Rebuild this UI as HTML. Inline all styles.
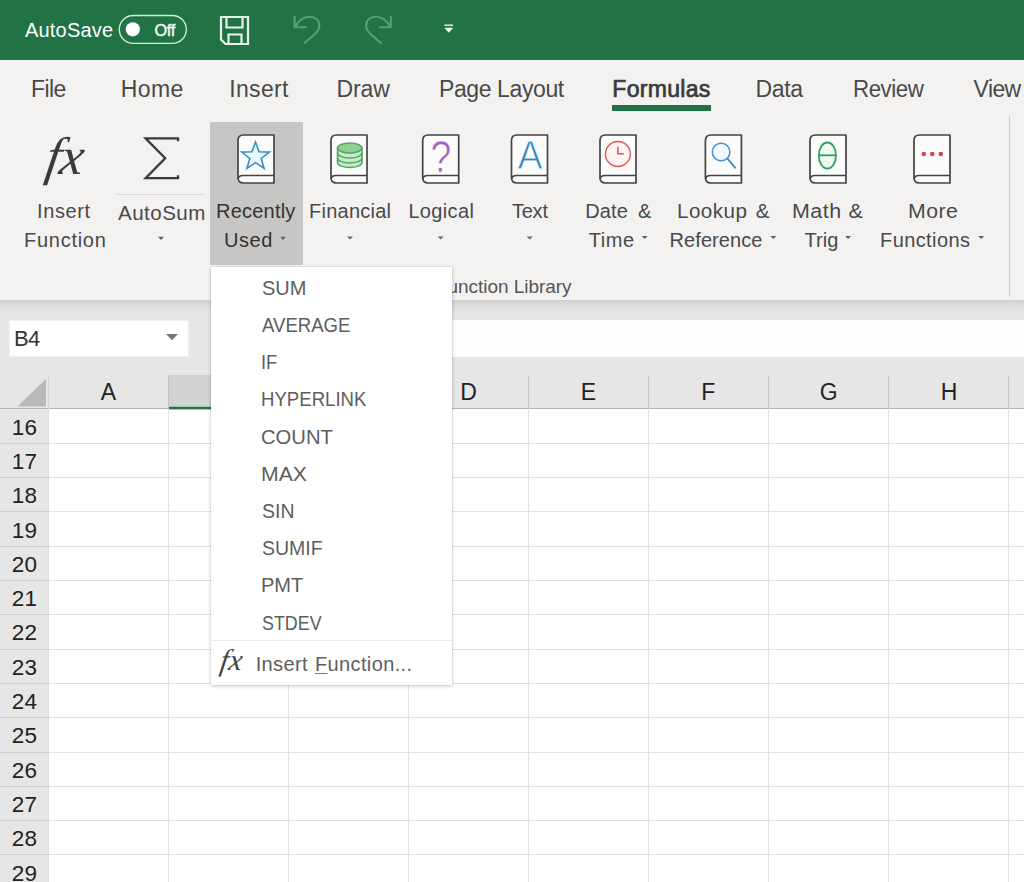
<!DOCTYPE html>
<html lang="en">
<head>
<meta charset="utf-8">
<title>Excel - Recently Used</title>
<style>
html,body{margin:0;padding:0;}
body{width:1024px;height:882px;overflow:hidden;position:relative;background:#fff;font-family:"Liberation Sans",sans-serif;}
.a{position:absolute;}
.t{position:absolute;white-space:nowrap;line-height:normal;}
#title{left:0;top:0;width:1024px;height:60px;background:#217346;}
#ribbon{left:0;top:60px;width:1024px;height:240px;background:#f3f2f1;}
#rshadow{left:0;top:300px;width:1024px;height:14px;background:linear-gradient(#cdcdcd,#d7d7d7 18%,#dfdfdf 50%,#e6e6e6);}
#fbar{left:0;top:300px;width:1024px;height:74px;background:#e6e6e6;}
#namebox{left:8.5px;top:319.5px;width:180px;height:37.5px;background:#fff;box-sizing:border-box;border:1px solid #f0f0f0;}
#finput{left:300px;top:320px;width:724px;height:36.5px;background:#fdfdfd;}
#colhdr{left:0;top:374px;width:1024px;height:35px;background:#e6e6e6;border-bottom:1px solid #b4b4b4;box-sizing:border-box;}
#rowhdr{left:0;top:409px;width:48px;height:473px;background:#e6e6e6;}
#grid{left:48px;top:409px;width:976px;height:473px;background:#fff;}
#hl{left:210px;top:122px;width:93px;height:143px;background:#c8c6c4;}
#menu{left:211px;top:267px;width:241px;height:418px;background:#fff;box-shadow:0 1px 4px rgba(0,0,0,0.22),0 0 1px rgba(0,0,0,0.2);}
#msep{left:211px;top:640px;width:241px;height:1px;background:#ebebeb;}
u{text-decoration-thickness:1px;text-underline-offset:1.5px;text-decoration-color:#777;}
#tabul{left:612.3px;top:105px;width:98.8px;height:5.7px;background:#217346;}
</style>
</head>
<body>
<div class="a" id="title"></div>
<div class="a" id="ribbon"></div>
<div class="a" id="fbar"></div>
<div class="a" id="rshadow"></div>
<div class="a" id="namebox"></div>
<div class="a" id="finput"></div>
<div class="a" id="colhdr"></div>
<div class="a" id="grid"></div>
<div class="a" id="rowhdr"></div>
<div class="a" id="hl"></div>
<div class="a" id="tabul"></div>
<svg class="a" style="left:0;top:0" width="1024" height="882" viewBox="0 0 1024 882">
<rect x="119.3" y="15.5" width="67" height="27.9" rx="13.95" fill="none" stroke="#d3eadc" stroke-width="1.4"/>
<circle cx="132.8" cy="29.3" r="7.1" fill="#fff"/>
<g fill="none" stroke="#e6f2ea" stroke-width="2.2" stroke-linejoin="miter"><path d="M221 17H248V44H225.5L221 39.5Z"/><path d="M226.5 17V27.5H242.5V17"/><path d="M228.5 44V34.5H241.5V44"/></g>
<g fill="none" stroke="#56a077" stroke-width="2.1"><path d="M294.6 16V27.3H306.4"/><path d="M295.4 26.6Q301.0 16.6 310.0 16.8Q319.3 17.6 319.3 25.6Q319.3 30 315.0 34L304.0 43.5"/></g>
<g fill="none" stroke="#56a077" stroke-width="2.1"><path d="M390.8 16V27.3H379.0"/><path d="M390.0 26.6Q384.4 16.6 375.4 16.8Q366.1 17.6 366.1 25.6Q366.1 30 370.4 34L381.4 43.5"/></g>
<path d="M444.5 25.2h8.5" stroke="#eef6f1" stroke-width="1.4"/><path d="M444.3 27.8h9l-4.5 5z" fill="#eef6f1"/>
<path d="M1009.5 116V296.5" stroke="#cbcac8" stroke-width="1"/>
<path d="M116 194.5H205" stroke="#dedcda" stroke-width="1"/>
<path d="M178 141.2V138.3H145.6L165.2 158.2L145.6 178.1H178V175.2" fill="none" stroke="#3b3b3b" stroke-width="2.3" stroke-linejoin="miter"/>
<g transform="translate(237,134)">
<path d="M37 1H6.5Q1 1 1 6.5V43.5Q1 49 6.5 49H37Z" fill="#fbfbfb" stroke="#444" stroke-width="1.7" stroke-linejoin="round"/>
<path d="M37 41.5H6Q1.5 41.5 1.2 45" fill="none" stroke="#444" stroke-width="1.6"/>
<polygon points="18.50,8.00 22.03,17.75 32.39,18.09 24.21,24.45 27.08,34.41 18.50,28.60 9.92,34.41 12.79,24.45 4.61,18.09 14.97,17.75" fill="#e9f7fe" stroke="#3a8ec2" stroke-width="1.6" stroke-linejoin="miter"/></g>
<g transform="translate(330,134)">
<path d="M37 1H6.5Q1 1 1 6.5V43.5Q1 49 6.5 49H37Z" fill="#fbfbfb" stroke="#444" stroke-width="1.7" stroke-linejoin="round"/>
<path d="M37 41.5H6Q1.5 41.5 1.2 45" fill="none" stroke="#444" stroke-width="1.6"/>
<g fill="#c3ebc6" stroke="#55a365" stroke-width="1.5"><path d="M7.5 14V28.5C7.5 35 32 35 32 28.5V14Z"/><ellipse cx="19.75" cy="14" rx="12.25" ry="5" fill="#8fd094"/><path d="M7.5 19C7.5 25.5 32 25.5 32 19" fill="none"/><path d="M7.5 24C7.5 30.5 32 30.5 32 24" fill="none"/></g></g>
<g transform="translate(421.7,134)">
<path d="M37 1H6.5Q1 1 1 6.5V43.5Q1 49 6.5 49H37Z" fill="#fbfbfb" stroke="#444" stroke-width="1.7" stroke-linejoin="round"/>
<path d="M37 41.5H6Q1.5 41.5 1.2 45" fill="none" stroke="#444" stroke-width="1.6"/>
<text transform="translate(19.1,37.5) scale(0.84,1)" x="0" y="0" font-family="Liberation Sans, sans-serif" font-size="44.5" fill="#a55cc4" stroke="#fbfbfb" stroke-width="0.7" paint-order="fill stroke" text-anchor="middle">?</text></g>
<g transform="translate(510.5,134)">
<path d="M37 1H6.5Q1 1 1 6.5V43.5Q1 49 6.5 49H37Z" fill="#fbfbfb" stroke="#444" stroke-width="1.7" stroke-linejoin="round"/>
<path d="M37 41.5H6Q1.5 41.5 1.2 45" fill="none" stroke="#444" stroke-width="1.6"/>
<text transform="translate(19.6,35.3) scale(0.93,1)" x="0" y="0" font-family="Liberation Sans, sans-serif" font-size="40.5" fill="#2f87c3" stroke="#fbfbfb" stroke-width="0.9" paint-order="fill stroke" text-anchor="middle">A</text></g>
<g transform="translate(599,134)">
<path d="M37 1H6.5Q1 1 1 6.5V43.5Q1 49 6.5 49H37Z" fill="#fbfbfb" stroke="#444" stroke-width="1.7" stroke-linejoin="round"/>
<path d="M37 41.5H6Q1.5 41.5 1.2 45" fill="none" stroke="#444" stroke-width="1.6"/>
<circle cx="18.9" cy="20" r="12.5" fill="#fef4f4" stroke="#dc5653" stroke-width="1.4"/><path d="M18.9 12.8V19.7H24.9" fill="none" stroke="#dc5653" stroke-width="1.5"/></g>
<g transform="translate(704.4,134)">
<path d="M37 1H6.5Q1 1 1 6.5V43.5Q1 49 6.5 49H37Z" fill="#fbfbfb" stroke="#444" stroke-width="1.7" stroke-linejoin="round"/>
<path d="M37 41.5H6Q1.5 41.5 1.2 45" fill="none" stroke="#444" stroke-width="1.6"/>
<circle cx="16.7" cy="18" r="8.8" fill="#f1f9fe" stroke="#3f90c4" stroke-width="1.5"/><path d="M22.9 24.3L31.3 34.3" stroke="#3f90c4" stroke-width="1.9"/></g>
<g transform="translate(809,134)">
<path d="M37 1H6.5Q1 1 1 6.5V43.5Q1 49 6.5 49H37Z" fill="#fbfbfb" stroke="#444" stroke-width="1.7" stroke-linejoin="round"/>
<path d="M37 41.5H6Q1.5 41.5 1.2 45" fill="none" stroke="#444" stroke-width="1.6"/>
<ellipse cx="18.4" cy="21.5" rx="8.6" ry="13" fill="#f0faf3" stroke="#2fa35b" stroke-width="1.8"/><path d="M10 21.3H27" stroke="#2fa35b" stroke-width="1.8"/></g>
<g transform="translate(913,134)">
<path d="M37 1H6.5Q1 1 1 6.5V43.5Q1 49 6.5 49H37Z" fill="#fbfbfb" stroke="#444" stroke-width="1.7" stroke-linejoin="round"/>
<path d="M37 41.5H6Q1.5 41.5 1.2 45" fill="none" stroke="#444" stroke-width="1.6"/>
<circle cx="10.8" cy="20" r="2.3" fill="#d9434a"/><circle cx="19.3" cy="20" r="2.3" fill="#d9434a"/><circle cx="27.8" cy="20" r="2.3" fill="#d9434a"/></g>
<path d="M158.00 236.70h6l-3 3.2z" fill="#636363"/>
<path d="M280.00 236.70h6l-3 3.2z" fill="#636363"/>
<path d="M347.00 236.40h6l-3 3.2z" fill="#636363"/>
<path d="M437.60 236.40h6l-3 3.2z" fill="#636363"/>
<path d="M526.70 236.40h6l-3 3.2z" fill="#636363"/>
<path d="M641.70 235.90h6l-3 3.2z" fill="#636363"/>
<path d="M770.40 235.90h6l-3 3.2z" fill="#636363"/>
<path d="M845.10 235.90h6l-3 3.2z" fill="#636363"/>
<path d="M978.20 235.90h6l-3 3.2z" fill="#636363"/>
<path d="M166 334h12l-6 6.3z" fill="#777"/>
<path d="M46 379V406.5H17.5Z" fill="#b9b9b9"/>
<rect x="168.5" y="375" width="120" height="32" fill="#d3d3d3"/><rect x="168.5" y="406.8" width="120" height="2.6" fill="#217346"/>
<path d="M48.5 376V409" stroke="#d9d9d9" stroke-width="1"/>
<path d="M168.5 376V409" stroke="#c6c6c6" stroke-width="1"/>
<path d="M288.5 376V409" stroke="#c6c6c6" stroke-width="1"/>
<path d="M408.5 376V409" stroke="#c6c6c6" stroke-width="1"/>
<path d="M528.5 376V409" stroke="#c6c6c6" stroke-width="1"/>
<path d="M648.5 376V409" stroke="#c6c6c6" stroke-width="1"/>
<path d="M768.5 376V409" stroke="#c6c6c6" stroke-width="1"/>
<path d="M888.5 376V409" stroke="#c6c6c6" stroke-width="1"/>
<path d="M1008.5 376V409" stroke="#c6c6c6" stroke-width="1"/>
<path d="M168.5 409.5V882" stroke="#e1e1e1" stroke-width="1"/>
<path d="M288.5 409.5V882" stroke="#e1e1e1" stroke-width="1"/>
<path d="M408.5 409.5V882" stroke="#e1e1e1" stroke-width="1"/>
<path d="M528.5 409.5V882" stroke="#e1e1e1" stroke-width="1"/>
<path d="M648.5 409.5V882" stroke="#e1e1e1" stroke-width="1"/>
<path d="M768.5 409.5V882" stroke="#e1e1e1" stroke-width="1"/>
<path d="M888.5 409.5V882" stroke="#e1e1e1" stroke-width="1"/>
<path d="M1008.5 409.5V882" stroke="#e1e1e1" stroke-width="1"/>
<path d="M48.5 409V882" stroke="#dddddd" stroke-width="1"/>
<path d="M48.5 443.50H1024" stroke="#e1e1e1" stroke-width="1"/>
<path d="M0 443.50H48.5" stroke="#cdcdcd" stroke-width="1"/>
<path d="M48.5 477.50H1024" stroke="#e1e1e1" stroke-width="1"/>
<path d="M0 477.50H48.5" stroke="#cdcdcd" stroke-width="1"/>
<path d="M48.5 511.50H1024" stroke="#e1e1e1" stroke-width="1"/>
<path d="M0 511.50H48.5" stroke="#cdcdcd" stroke-width="1"/>
<path d="M48.5 546.50H1024" stroke="#e1e1e1" stroke-width="1"/>
<path d="M0 546.50H48.5" stroke="#cdcdcd" stroke-width="1"/>
<path d="M48.5 580.50H1024" stroke="#e1e1e1" stroke-width="1"/>
<path d="M0 580.50H48.5" stroke="#cdcdcd" stroke-width="1"/>
<path d="M48.5 614.50H1024" stroke="#e1e1e1" stroke-width="1"/>
<path d="M0 614.50H48.5" stroke="#cdcdcd" stroke-width="1"/>
<path d="M48.5 649.50H1024" stroke="#e1e1e1" stroke-width="1"/>
<path d="M0 649.50H48.5" stroke="#cdcdcd" stroke-width="1"/>
<path d="M48.5 683.50H1024" stroke="#e1e1e1" stroke-width="1"/>
<path d="M0 683.50H48.5" stroke="#cdcdcd" stroke-width="1"/>
<path d="M48.5 717.50H1024" stroke="#e1e1e1" stroke-width="1"/>
<path d="M0 717.50H48.5" stroke="#cdcdcd" stroke-width="1"/>
<path d="M48.5 752.50H1024" stroke="#e1e1e1" stroke-width="1"/>
<path d="M0 752.50H48.5" stroke="#cdcdcd" stroke-width="1"/>
<path d="M48.5 786.50H1024" stroke="#e1e1e1" stroke-width="1"/>
<path d="M0 786.50H48.5" stroke="#cdcdcd" stroke-width="1"/>
<path d="M48.5 820.50H1024" stroke="#e1e1e1" stroke-width="1"/>
<path d="M0 820.50H48.5" stroke="#cdcdcd" stroke-width="1"/>
<path d="M48.5 854.50H1024" stroke="#e1e1e1" stroke-width="1"/>
<path d="M0 854.50H48.5" stroke="#cdcdcd" stroke-width="1"/>
</svg>
<span class="t" style="left:25.00px;top:19.40px;font-size:20px;color:#fff;letter-spacing:0.199px;">AutoSave</span>
<span class="t" style="left:154.40px;top:20.95px;font-size:16.3px;color:#f0faf3;letter-spacing:-0.297px;-webkit-text-stroke:0.45px #f0faf3;">Off</span>
<span class="t" style="left:31.00px;top:76.19px;font-size:23px;color:#494949;letter-spacing:-0.590px;">File</span>
<span class="t" style="left:120.75px;top:76.19px;font-size:23px;color:#494949;letter-spacing:0.396px;">Home</span>
<span class="t" style="left:229.25px;top:76.19px;font-size:23px;color:#494949;letter-spacing:0.324px;">Insert</span>
<span class="t" style="left:336.50px;top:76.19px;font-size:23px;color:#494949;letter-spacing:-0.120px;">Draw</span>
<span class="t" style="left:439.00px;top:75.98px;font-size:23px;color:#494949;letter-spacing:-0.397px;">Page Layout</span>
<span class="t" style="left:612.30px;top:75.98px;font-size:23px;color:#3a3a3a;letter-spacing:0.307px;-webkit-text-stroke:0.7px #3a3a3a;">Formulas</span>
<span class="t" style="left:755.60px;top:76.19px;font-size:23px;color:#494949;letter-spacing:-0.397px;">Data</span>
<span class="t" style="left:852.73px;top:76.19px;font-size:23px;color:#494949;letter-spacing:-0.450px;transform:scaleX(0.9690);transform-origin:0 0;">Review</span>
<span class="t" style="left:973.60px;top:76.19px;font-size:23px;color:#494949;letter-spacing:-0.600px;">View</span>
<span class="t" style="left:37.00px;top:200.00px;font-size:20px;color:#494949;letter-spacing:0.627px;">Insert</span>
<span class="t" style="left:24.00px;top:228.80px;font-size:20px;color:#494949;letter-spacing:0.731px;">Function</span>
<span class="t" style="left:118.00px;top:201.70px;font-size:20px;color:#494949;letter-spacing:0.450px;transform:scaleX(1.0284);transform-origin:0 0;">AutoSum</span>
<span class="t" style="left:216.00px;top:200.00px;font-size:20px;color:#333;letter-spacing:0.213px;">Recently</span>
<span class="t" style="left:224.00px;top:228.80px;font-size:20px;color:#333;letter-spacing:0.561px;">Used</span>
<span class="t" style="left:309.00px;top:200.00px;font-size:20px;color:#494949;letter-spacing:0.251px;">Financial</span>
<span class="t" style="left:408.40px;top:200.00px;font-size:20px;color:#494949;letter-spacing:0.344px;">Logical</span>
<span class="t" style="left:511.90px;top:200.00px;font-size:20px;color:#494949;letter-spacing:-0.208px;">Text</span>
<span class="t" style="left:585.25px;top:200.00px;font-size:20px;color:#494949;letter-spacing:0.142px;word-spacing:4.136px;">Date &</span>
<span class="t" style="left:588.75px;top:228.80px;font-size:20px;color:#494949;letter-spacing:0.557px;">Time</span>
<span class="t" style="left:676.77px;top:200.00px;font-size:20px;color:#494949;letter-spacing:0.450px;word-spacing:2.120px;transform:scaleX(1.0308);transform-origin:0 0;">Lookup &</span>
<span class="t" style="left:669.60px;top:228.80px;font-size:20px;color:#494949;letter-spacing:0.056px;">Reference</span>
<span class="t" style="left:792.33px;top:200.00px;font-size:20px;color:#494949;letter-spacing:0.450px;word-spacing:0.265px;transform:scaleX(1.0735);transform-origin:0 0;">Math &</span>
<span class="t" style="left:804.40px;top:228.80px;font-size:20px;color:#494949;letter-spacing:0.074px;">Trig</span>
<span class="t" style="left:907.94px;top:200.00px;font-size:20px;color:#494949;letter-spacing:0.450px;transform:scaleX(1.0646);transform-origin:0 0;">More</span>
<span class="t" style="left:880.00px;top:228.80px;font-size:20px;color:#494949;letter-spacing:0.411px;">Functions</span>
<span class="t" style="left:436.00px;top:276.11px;font-size:19px;color:#555;letter-spacing:-0.049px;">Function Library</span>
<span class="t" style="left:43.50px;top:125.58px;font-size:53px;color:#3b3b3b;font-family:'Liberation Serif',serif;font-style:italic;letter-spacing:-0.725px;transform:skewX(-9deg);transform-origin:0 80%;">fx</span>
<span class="t" style="left:14.00px;top:326.09px;font-size:22px;color:#333;letter-spacing:-0.674px;">B4</span>
<span class="t" style="left:100.70px;top:379.19px;font-size:23px;color:#222;">A</span>
<span class="t" style="left:220.70px;top:379.19px;font-size:23px;color:#222;">B</span>
<span class="t" style="left:340.20px;top:379.19px;font-size:23px;color:#222;">C</span>
<span class="t" style="left:460.20px;top:379.19px;font-size:23px;color:#222;">D</span>
<span class="t" style="left:580.70px;top:379.19px;font-size:23px;color:#222;">E</span>
<span class="t" style="left:701.20px;top:379.19px;font-size:23px;color:#222;">F</span>
<span class="t" style="left:819.70px;top:379.19px;font-size:23px;color:#222;">G</span>
<span class="t" style="left:940.70px;top:379.19px;font-size:23px;color:#222;">H</span>
<span class="t" style="left:11.70px;top:414.64px;font-size:22.5px;color:#222;letter-spacing:0.287px;">16</span>
<span class="t" style="left:11.70px;top:448.94px;font-size:22.5px;color:#222;letter-spacing:0.287px;">17</span>
<span class="t" style="left:11.70px;top:483.24px;font-size:22.5px;color:#222;letter-spacing:0.287px;">18</span>
<span class="t" style="left:11.70px;top:517.54px;font-size:22.5px;color:#222;letter-spacing:0.287px;">19</span>
<span class="t" style="left:11.70px;top:551.84px;font-size:22.5px;color:#222;letter-spacing:0.287px;">20</span>
<span class="t" style="left:11.70px;top:586.14px;font-size:22.5px;color:#222;letter-spacing:0.287px;">21</span>
<span class="t" style="left:11.70px;top:620.44px;font-size:22.5px;color:#222;letter-spacing:0.287px;">22</span>
<span class="t" style="left:11.70px;top:654.74px;font-size:22.5px;color:#222;letter-spacing:0.287px;">23</span>
<span class="t" style="left:11.70px;top:689.04px;font-size:22.5px;color:#222;letter-spacing:0.287px;">24</span>
<span class="t" style="left:11.70px;top:723.34px;font-size:22.5px;color:#222;letter-spacing:0.287px;">25</span>
<span class="t" style="left:11.70px;top:757.64px;font-size:22.5px;color:#222;letter-spacing:0.287px;">26</span>
<span class="t" style="left:11.70px;top:791.94px;font-size:22.5px;color:#222;letter-spacing:0.287px;">27</span>
<span class="t" style="left:11.70px;top:826.24px;font-size:22.5px;color:#222;letter-spacing:0.287px;">28</span>
<span class="t" style="left:11.70px;top:860.54px;font-size:22.5px;color:#222;letter-spacing:0.287px;">29</span>
<div class="a" id="menu"></div>
<div class="a" id="msep"></div>

<span class="t" style="left:262.30px;top:276.70px;font-size:20px;color:#5e5e5e;transform:scaleX(0.9981);transform-origin:0 0;">SUM</span>
<span class="t" style="left:262.30px;top:313.90px;font-size:20px;color:#5e5e5e;transform:scaleX(0.9286);transform-origin:0 0;">AVERAGE</span>
<span class="t" style="left:261.39px;top:351.10px;font-size:20px;color:#5e5e5e;transform:scaleX(0.9120);transform-origin:0 0;">IF</span>
<span class="t" style="left:261.37px;top:388.30px;font-size:20px;color:#5e5e5e;transform:scaleX(0.9298);transform-origin:0 0;">HYPERLINK</span>
<span class="t" style="left:261.29px;top:425.50px;font-size:20px;color:#5e5e5e;transform:scaleX(1.0116);transform-origin:0 0;">COUNT</span>
<span class="t" style="left:261.24px;top:462.70px;font-size:20px;color:#5e5e5e;transform:scaleX(1.0619);transform-origin:0 0;">MAX</span>
<span class="t" style="left:262.30px;top:499.90px;font-size:20px;color:#5e5e5e;transform:scaleX(0.9750);transform-origin:0 0;">SIN</span>
<span class="t" style="left:262.30px;top:537.10px;font-size:20px;color:#5e5e5e;transform:scaleX(0.9758);transform-origin:0 0;">SUMIF</span>
<span class="t" style="left:261.30px;top:574.30px;font-size:20px;color:#5e5e5e;transform:scaleX(1.0024);transform-origin:0 0;">PMT</span>
<span class="t" style="left:262.30px;top:611.50px;font-size:20px;color:#5e5e5e;transform:scaleX(0.8940);transform-origin:0 0;">STDEV</span>
<span class="t" style="left:255.70px;top:652.80px;font-size:20px;color:#5e5e5e;letter-spacing:0.367px;word-spacing:1.155px;">Insert <u>F</u>unction...</span>
<span class="t" style="left:219.00px;top:643.27px;font-size:30px;color:#444;font-family:'Liberation Serif',serif;font-style:italic;letter-spacing:0.265px;transform:skewX(-9deg);transform-origin:0 80%;">fx</span>
</body>
</html>
